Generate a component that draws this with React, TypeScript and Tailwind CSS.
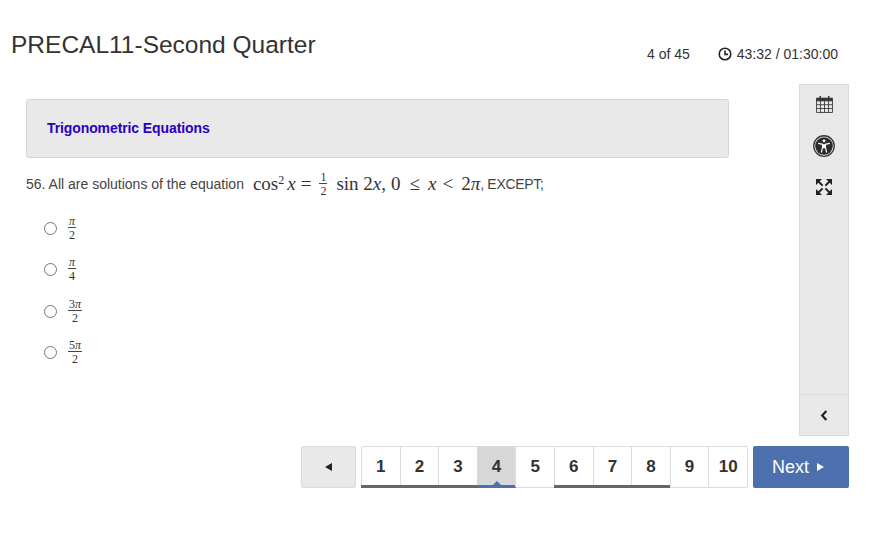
const pages = [
  { n: 1, seen: true },
  { n: 2, seen: true },
  { n: 3, seen: true },
  { n: 4, current: true },
  { n: 5 },
  { n: 6, seen: true },
  { n: 7, seen: true },
  { n: 8, seen: true },
  { n: 9 },
  { n: 10 },
];

function Frac({ top, bottom, size = "text-[12px]" }: { top: React.ReactNode; bottom: React.ReactNode; size?: string }) {
  return (
    <span className={`inline-flex flex-col items-center leading-[11px] ${size} font-['Liberation_Serif',serif] text-[#333]`}>
      <span className="px-px">{top}</span>
      <span className="self-stretch h-px mb-[2px] bg-[#444]" />
      <span className="px-px">{bottom}</span>
    </span>
  );
}

const Pi = () => <i>π</i>;

const options = [
  { top: <Pi />, bottom: "2" },
  { top: <Pi />, bottom: "4" },
  { top: <>3<Pi /></>, bottom: "2" },
  { top: <>5<Pi /></>, bottom: "2" },
];

function App() {
  return (
    <div className="w-[870px] h-[555px] bg-white overflow-hidden font-['Liberation_Sans',Arial,sans-serif] text-[#333]">
      {/* Header */}
      <div className="flex justify-between h-[84px] pl-[11px] pr-[32px]">
        <h1 className="pt-[30px] text-[24.5px] leading-[30px]">PRECAL11-Second Quarter</h1>
        <div className="flex items-start pt-[46px] text-[14px] leading-4">
          <span className="mr-[28px]">4 of 45</span>
          <svg viewBox="0 0 16 16" className="w-[14px] h-[14px] mt-px mr-[5px]" fill="none" stroke="#222" strokeWidth="1.8">
            <circle cx="8" cy="8" r="6.6" />
            <path d="M8 4v4.4h3.6" />
          </svg>
          <span>43:32 / 01:30:00</span>
        </div>
      </div>

      {/* Body */}
      <div className="flex justify-between h-[352px] pl-[26px] pr-[21px]">
        <div className="w-[703px] pt-[15px]">
          <div className="h-[59px] flex items-center pl-[20px] bg-[#e9e9e9] border border-[#d5d5d5] rounded-[3px]">
            <span className="text-[14px] font-bold tracking-[-0.1px] text-[#2a00c4]">Trigonometric Equations</span>
          </div>

          <div className="flex items-center h-[26px] mt-[13px] text-[14px] text-[#444] whitespace-nowrap">
            <span>56. All are solutions of the equation</span>
            <span className="flex items-center ml-[9px] font-['Liberation_Serif',serif] text-[19px] text-[#333]">
              <span>cos<sup className="text-[12px]">2</sup></span>
              <i className="ml-[3px]">x</i>
              <span className="ml-[5px] mr-[8px]">=</span>
              <Frac top="1" bottom="2" />
              <span className="ml-[9px]">sin 2<i>x</i>,</span>
              <span className="ml-[5px]">0</span>
              <span className="ml-[9px]">≤</span>
              <i className="ml-[8px]">x</i>
              <span className="ml-[6px] mr-[8px]">&lt;</span>
              <span>2<i>π</i></span>
            </span>
            <span className="tracking-[-0.3px]">, EXCEPT;</span>
          </div>

          <div className="flex flex-col gap-[13.5px] mt-[17px] pl-[18px]">
            {options.map((o, i) => (
              <label key={i} className="flex items-center h-[28px] gap-[11px]">
                <span className="w-[13px] h-[13px] rounded-full border border-[#767676] bg-white" />
                <Frac top={o.top} bottom={o.bottom} />
              </label>
            ))}
          </div>
        </div>

        {/* Side tools */}
        <div className="w-[50px] flex flex-col bg-[#e9e9e9] border border-[#dcdcdc]">
          <div className="flex-1 flex flex-col items-center pt-[11px]">
            <svg viewBox="0 0 16 16" className="w-[17px] h-[17px]" fill="none" stroke="#333" strokeWidth="0.8">
              <path d="M4 0v3M12 0v3" strokeWidth="1.3" />
              <path d="M.5 2h15v2.6H.5z" fill="#333" />
              <path d="M.5 4.6v10.9h15V4.6M.5 8.2h15M.5 11.8h15M4.2 4.6v10.9M8 4.6v10.9M11.8 4.6v10.9" />
            </svg>
            <svg viewBox="0 0 24 24" className="w-[22px] h-[22px] mt-[22px]">
              <circle cx="12" cy="12" r="11.2" fill="#e9e9e9" stroke="#3a3a3a" strokeWidth="1.4" />
              <circle cx="12" cy="12" r="9.6" fill="#2b2b2b" />
              <circle cx="12" cy="6.4" r="1.6" fill="#fff" />
              <path d="M6 9.2 10.4 10.2V13.6L9.2 18.8M18 9.2 13.6 10.2V13.6L14.8 18.8" fill="none" stroke="#fff" strokeWidth="1.3" strokeLinecap="round" />
              <path d="M10.2 10h3.6v4.4h-3.6z" fill="#fff" />
            </svg>
            <svg viewBox="0 0 16 16" className="w-[16px] h-[16px] mt-[22px]" fill="#222" stroke="#222">
              <path d="M0 0h6L0 6zM16 0v6l-6-6zM0 16v-6l6 6zM16 16h-6l6-6z" strokeWidth="0" />
              <path d="M2 2l4.6 4.6M14 2 9.4 6.6M2 14l4.6-4.6M14 14 9.4 9.4" strokeWidth="2" />
            </svg>
          </div>
          <div className="h-[41px] flex items-center justify-center border-t border-[#dcdcdc]">
            <svg viewBox="0 0 8 12" className="w-[8px] h-[11px]" fill="none" stroke="#222" strokeWidth="2.4">
              <path d="M6.6 1 2 6l4.6 5" />
            </svg>
          </div>
        </div>
      </div>

      {/* Pagination */}
      <div className="flex justify-end h-[42px] mt-[10px] pr-[21px]">
        <button className="w-[55px] flex items-center justify-center bg-[#e9e9e9] border border-[#dcdcdc] rounded-[2px]">
          <span className="w-0 h-0 border-y-[4px] border-y-transparent border-r-[7px] border-r-[#222]" />
        </button>
        <div className="flex ml-[5px] w-[387px] bg-white border border-[#dcdcdc] rounded-[2px]">
          {pages.map((p) => (
            <div
              key={p.n}
              className={`relative flex-1 flex items-center justify-center text-[17px] font-bold text-[#333] border-l first:border-l-0 ${
                p.current ? "bg-[#d7d7d7] border-l-[#d7d7d7]" : "border-l-[#dcdcdc]"
              }`}
            >
              {p.n}
              {p.seen && <span className="absolute left-[-1px] right-0 bottom-[-1px] h-[3px] bg-[#666]" />}
              {p.current && (
                <>
                  <span className="absolute left-[-1px] right-[-1px] bottom-[-1px] h-[3px] bg-[#4c70ad]" />
                  <span className="absolute left-1/2 -translate-x-1/2 bottom-[2px] w-0 h-0 border-x-[4px] border-x-transparent border-b-[4px] border-b-[#4c70ad]" />
                </>
              )}
            </div>
          ))}
        </div>
        <button className="w-[96px] ml-[5px] pr-[6px] flex items-center justify-center gap-[8px] bg-[#4c70ad] rounded-[2px] text-white text-[18px]">
          Next
          <span className="w-0 h-0 border-y-[4px] border-y-transparent border-l-[7px] border-l-white" />
        </button>
      </div>
    </div>
  );
}

export default App;
